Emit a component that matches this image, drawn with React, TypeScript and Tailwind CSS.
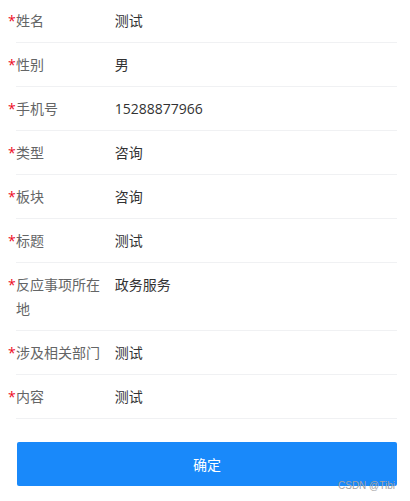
const FIELDS = [
  { label: '姓名', value: '测试' },
  { label: '性别', value: '男' },
  { label: '手机号', value: '15288877966' },
  { label: '类型', value: '咨询' },
  { label: '板块', value: '咨询' },
  { label: '标题', value: '测试' },
  { label: '反应事项所在地', value: '政务服务' },
  { label: '涉及相关部门', value: '测试' },
  { label: '内容', value: '测试' },
]

export default function App() {
  return (
    <div className="flex min-h-[501px] w-[410px] flex-col bg-white font-['Open_Sans','Noto_Sans_CJK_SC',sans-serif] text-[14px]">
      {/* Form cells */}
      <div className="-mt-px pl-4 pr-[13px]">
        {FIELDS.map(f => (
          <div key={f.label} className="flex border-b border-[#f0f1f3] pt-[10px] pb-[9px] leading-6">
            <span className="-ml-2 w-2 shrink-0 text-[#ee0a24]">*</span>
            <div className="mr-3 w-[86.8px] shrink-0 text-[#646566]">{f.label}</div>
            <div className="flex-1 text-[#323233]">{f.value}</div>
          </div>
        ))}
      </div>

      {/* Submit */}
      <div className="mt-[23px] pl-[17px] pr-[13px]">
        <button className="h-11 w-full rounded-[2px] bg-[#1989fa] text-[14px] text-white">确定</button>
      </div>

      {/* Watermark */}
      <div className="-mt-[6px] flex justify-end pr-[15px]">
        <span className="font-['Liberation_Sans',sans-serif] text-[10px] leading-3 text-[#a3a3a3]">CSDN @Tibi</span>
      </div>
    </div>
  )
}
